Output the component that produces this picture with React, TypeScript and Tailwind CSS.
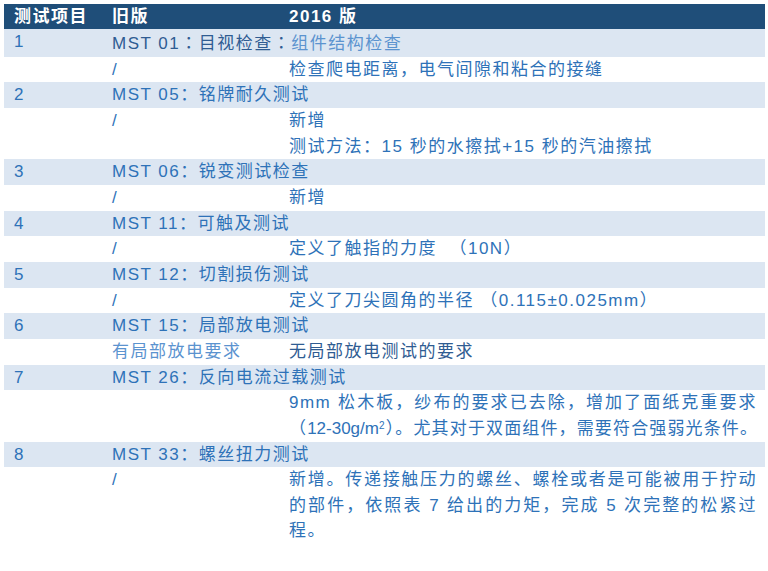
import React from 'react';

type Cell = React.ReactNode;

interface Row {
  no?: string;
  old: Cell;
  next?: Cell;
  shaded: boolean;
}

const dark = 'text-[#2f5c92]';
const light = 'text-[#5b93cf]';

// centered colon, as in the source deck
const Colon = () => <span className="font-['Noto_Sans_CJK_JP',sans-serif]">：</span>;

// a full line stretched to the column edge
const Full = ({ children, tight }: { children: React.ReactNode; tight?: boolean }) => (
  <div className={`whitespace-nowrap text-justify [text-align-last:justify] ${tight ? 'tracking-[0px]' : ''}`}>
    {children}
  </div>
);

const rows: Row[] = [
  {
    no: '1',
    shaded: true,
    old: (
      <span className="whitespace-nowrap">
        <span className={dark}>
          MST 01<Colon />目视检查<Colon />
        </span>
        <span className={light}>组件结构检查</span>
      </span>
    ),
  },
  { shaded: false, old: '/', next: '检查爬电距离，电气间隙和粘合的接缝' },
  { no: '2', shaded: true, old: 'MST 05：铭牌耐久测试' },
  {
    shaded: false,
    old: '/',
    next: (
      <>
        <div>新增</div>
        <div>测试方法：15 秒的水擦拭+15 秒的汽油擦拭</div>
      </>
    ),
  },
  { no: '3', shaded: true, old: 'MST 06：锐变测试检查' },
  { shaded: false, old: '/', next: '新增' },
  { no: '4', shaded: true, old: 'MST 11：可触及测试' },
  { shaded: false, old: '/', next: '定义了触指的力度\u00a0 （10N）' },
  { no: '5', shaded: true, old: 'MST 12：切割损伤测试' },
  { shaded: false, old: '/', next: '定义了刀尖圆角的半径 （0.115±0.025mm）' },
  { no: '6', shaded: true, old: 'MST 15：局部放电测试' },
  {
    shaded: false,
    old: <span className={light}>有局部放电要求</span>,
    next: <span className={dark}>无局部放电测试的要求</span>,
  },
  { no: '7', shaded: true, old: 'MST 26：反向电流过载测试' },
  {
    shaded: false,
    old: '',
    next: (
      <>
        <Full>9mm 松木板，纱布的要求已去除，增加了面纸克重要求</Full>
        <Full tight>
          （12-30g/m<sup className="text-[10px] leading-none">2</sup>）。尤其对于双面组件，需要符合强弱光条件。
        </Full>
      </>
    ),
  },
  { no: '8', shaded: true, old: 'MST 33：螺丝扭力测试' },
  {
    shaded: false,
    old: '/',
    next: (
      <>
        <Full>新增。传递接触压力的螺丝、螺栓或者是可能被用于拧动</Full>
        <Full>的部件，依照表 7 给出的力矩，完成 5 次完整的松紧过</Full>
        <div>程。</div>
      </>
    ),
  },
];

export default function App() {
  return (
    <div className="w-[768px] h-[571px] bg-white pt-[4px] pl-[4px] overflow-hidden font-['Liberation_Sans','Noto_Sans_CJK_SC',sans-serif] text-[17px] tracking-[1.5px] text-[#2e72b8]">
      <div className="w-[761px]">
        <div className="grid grid-cols-[98px_177px_1fr] bg-[#1f4e79] text-white font-bold leading-[25px]">
          <div className="pl-[10px]">测试项目</div>
          <div className="pl-[10px]">旧版</div>
          <div className="pl-[10px]">2016 版</div>
        </div>
        {rows.map((r, i) => (
          <div
            key={i}
            className={`grid grid-cols-[98px_177px_1fr] leading-[25.65px] ${r.shaded ? 'bg-[#dce6f2]' : 'bg-white'}`}
          >
            <div className="pl-[10px]">{r.no}</div>
            <div className={`pl-[10px] ${r.shaded ? 'col-span-2' : ''}`}>{r.old}</div>
            {!r.shaded && <div className="pl-[10px] pr-[8px]">{r.next}</div>}
          </div>
        ))}
      </div>
    </div>
  );
}
